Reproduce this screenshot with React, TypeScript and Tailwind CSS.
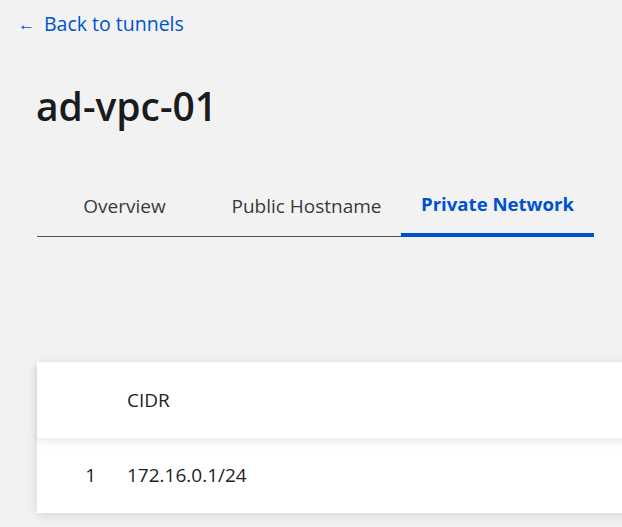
import React from "react";

const tabs = [
  { id: "overview", label: "Overview", width: "w-[175px]" },
  { id: "public", label: "Public Hostname", width: "w-[189px]" },
  { id: "private", label: "Private Network", width: "w-[193px]" },
];

const routes = [{ id: 1, cidr: "172.16.0.1/24" }];

const App = () => {
  const active = "private";
  return (
    <div
      className="min-h-[527px] w-full overflow-hidden bg-[#f2f2f2] text-[#201f1e]"
      style={{ fontFamily: '"Segoe UI", "Open Sans", sans-serif' }}
    >
      <a href="#" className="flex items-center gap-[9px] pl-[18px] pt-[10px] text-[19.5px] leading-[28px] text-[#0052cc]">
        <span className="text-[17px]">←</span>
        <span>Back to tunnels</span>
      </a>

      <h1 className="pl-[36px] pt-[42px] text-[39px] font-semibold leading-[52px] text-[#1b1b1b]">ad-vpc-01</h1>

      <div className="ml-[37px] mt-[52px] flex">
        {tabs.map((tab) => (
          <button
            key={tab.id}
            className={`${tab.width} border-b-[1px] pt-[7px] pb-[16px] text-center leading-[26px] ${
              tab.id === active
                ? "border-b-[4px] border-[#0052cc] pb-[13px] text-[18.6px] font-bold text-[#0052cc]"
                : "border-[#555] text-[19px] text-[#3b3a39]"
            }`}
          >
            {tab.label}
          </button>
        ))}
      </div>

      <div className="ml-[37px] mt-[125px] w-[600px] bg-white shadow-[0_2px_10px_rgba(0,0,0,0.12)]">
        <div className="flex h-[76px] items-center shadow-[0_4px_8px_rgba(0,0,0,0.08)]">
          <span className="w-[90px]" />
          <span className="text-[19px] text-[#201f1e]">CIDR</span>
        </div>
        {routes.map((route) => (
          <div key={route.id} className="flex h-[75px] items-center">
            <span className="w-[90px] pr-[31px] text-right text-[19px]">{route.id}</span>
            <span className="text-[19px] text-[#201f1e]">{route.cidr}</span>
          </div>
        ))}
      </div>
    </div>
  );
};

export default App;
